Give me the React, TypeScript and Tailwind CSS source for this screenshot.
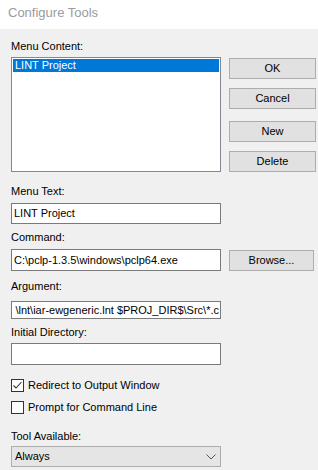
import React from "react";

function Btn({ label, className = "" }: { label: string; className?: string }) {
  return (
    <div
      className={
        "h-[21px] border border-[#adadad] bg-[#e1e1e1] flex items-center justify-center text-black " +
        className
      }
    >
      {label}
    </div>
  );
}

function Label({ text, className = "" }: { text: string; className?: string }) {
  return <div className={"h-[13px] leading-[13px] text-black " + className}>{text}</div>;
}

function Check({ checked, label, className = "" }: { checked: boolean; label: string; className?: string }) {
  return (
    <div className={"flex items-center h-[13px] " + className}>
      <div className="w-[13px] h-[13px] border border-[#333333] bg-white flex items-center justify-center">
        {checked && (
          <svg width="11" height="11" viewBox="0 0 11 11">
            <polyline points="1.5,5.5 4,8 9.5,2" fill="none" stroke="#333" strokeWidth="1.1" />
          </svg>
        )}
      </div>
      <span className="ml-[4px] leading-[13px] text-black">{label}</span>
    </div>
  );
}

export default function App() {
  return (
    <div
      className="w-[318px] h-[470px] overflow-hidden bg-[#f0f0f0] text-[11px]"
      style={{ fontFamily: "'Liberation Sans', Arial, sans-serif" }}
    >
      <div className="h-[29px] bg-white pl-[8px] pt-[5px] text-[13px] leading-[16px] text-[#9a9a9f]">
        Configure Tools
      </div>
      <div className="pl-[11px] pt-[11px]">
        <div className="flex">
          <div className="w-[210px]">
            <Label text="Menu Content:" />
            <div className="mt-[4px] h-[115px] border border-[#828790] bg-white p-[1px]">
              <div className="h-[13px] leading-[13px] bg-[#0078d7] text-white pl-[2px]">LINT Project</div>
            </div>
          </div>
          <div className="ml-[8px] w-[87px] pt-[18px] flex flex-col">
            <Btn label="OK" />
            <Btn label="Cancel" className="mt-[9px]" />
            <Btn label="New" className="mt-[12px]" />
            <Btn label="Delete" className="mt-[9px]" />
          </div>
        </div>

        <Label text="Menu Text:" className="mt-[13px]" />
        <div className="mt-[5px] w-[210px] h-[21px] border border-[#7a7a7a] bg-white flex items-center pl-[2px] text-black">
          LINT Project
        </div>

        <Label text="Command:" className="mt-[7px]" />
        <div className="mt-[5px] flex items-start">
          <div className="w-[210px] h-[22px] border border-[#7a7a7a] bg-white flex items-center pl-[2px] text-black whitespace-nowrap">
            C:\pclp-1.3.5\windows\pclp64.exe
          </div>
          <Btn label="Browse..." className="ml-[8px] mt-[1px] w-[85px]" />
        </div>

        <Label text="Argument:" className="mt-[9px]" />
        <div className="mt-[8px] w-[210px] h-[18px] border border-[#7a7a7a] bg-white flex items-center justify-end pr-[1px] overflow-hidden text-black whitespace-nowrap">
          \lnt\iar-ewgeneric.lnt $PROJ_DIR$\Src\*.c
        </div>

        <Label text="Initial Directory:" className="mt-[7px]" />
        <div className="mt-[4px] w-[210px] h-[22px] border border-[#7a7a7a] bg-white" />

        <Check checked label="Redirect to Output Window" className="mt-[14px]" />
        <Check checked={false} label="Prompt for Command Line" className="mt-[9px]" />

        <Label text="Tool Available:" className="mt-[16px]" />
        <div className="mt-[3px] w-[210px] h-[21px] border border-[#adadad] bg-[#e5e5e5] flex items-center justify-between pl-[3px] pr-[4px] text-black">
          <span>Always</span>
          <svg width="10" height="6" viewBox="0 0 10 6">
            <polyline points="0.5,0.5 5,5 9.5,0.5" fill="none" stroke="#555" strokeWidth="1" />
          </svg>
        </div>
      </div>
    </div>
  );
}
